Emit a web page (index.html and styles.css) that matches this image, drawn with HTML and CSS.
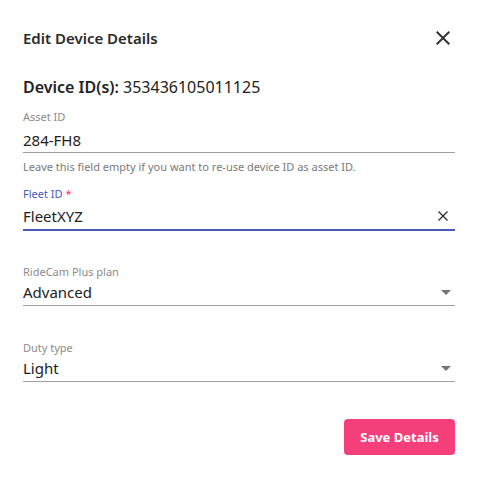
FILE: index.html
```html
<!DOCTYPE html>
<html>
<head>
<meta charset="utf-8">
<link rel="stylesheet" href="styles.css">
</head>
<body>
<div class="dialog">
  <div class="header">
    <h1 class="title">Edit Device Details</h1>
    <svg class="close" width="24" height="24" viewBox="0 0 24 24"><path d="M19 6.41L17.59 5 12 10.59 6.41 5 5 6.41 10.59 12 5 17.59 6.41 19 12 13.41 17.59 19 19 17.59 13.41 12z" fill="#333"/></svg>
  </div>
  <div class="device-id"><b>Device ID(s):</b> 353436105011125</div>

  <div class="field field-asset">
    <div class="label">Asset ID</div>
    <div class="control"><span class="value">284-FH8</span></div>
  </div>
  <div class="helper">Leave this field empty if you want to re-use device ID as asset ID.</div>

  <div class="field field-fleet">
    <div class="label label-focus">Fleet ID <span class="star">*</span></div>
    <div class="control control-focus">
      <span class="value">FleetXYZ</span>
      <svg class="clear" width="12" height="12" viewBox="0 0 12 12"><path d="M1.5 1.5L10.5 10.5M10.5 1.5L1.5 10.5" stroke="#333" stroke-width="1.4"/></svg>
    </div>
  </div>

  <div class="field field-select field-plan">
    <div class="label">RideCam Plus plan</div>
    <div class="control">
      <span class="value">Advanced</span>
      <svg class="arrow" width="24" height="24" viewBox="0 0 24 24"><path d="M7 10l5 5 5-5z" fill="#757575"/></svg>
    </div>
  </div>

  <div class="field field-select field-duty">
    <div class="label">Duty type</div>
    <div class="control">
      <span class="value">Light</span>
      <svg class="arrow" width="24" height="24" viewBox="0 0 24 24"><path d="M7 10l5 5 5-5z" fill="#757575"/></svg>
    </div>
  </div>

  <div class="actions">
    <button class="save">Save Details</button>
  </div>
</div>
</body>
</html>
```
FILE: styles.css
```css
html, body {
  margin: 0;
  padding: 0;
  background: #fff;
}
body {
  font-family: "Noto Sans", "Open Sans", sans-serif;
  color: #222;
}
.dialog {
  width: 479px;
  height: 479px;
  box-sizing: border-box;
  padding: 26px 24px 0 23px;
}
.header {
  display: flex;
  justify-content: space-between;
  align-items: center;
  height: 24px;
}
.title {
  margin: 0;
  font-size: 15px;
  line-height: 24px;
  font-weight: 600;
  color: #2b2b2b;
}
.close {
  display: block;
}
.device-id {
  margin-top: 26px;
  font-size: 16px;
  line-height: 22px;
  color: #222;
}
.device-id b {
  font-weight: 600;
}
.label {
  font-size: 11px;
  line-height: 14px;
  color: #8c8c8c;
}
.label-focus {
  color: #4a5ab9;
}
.star {
  color: #ea3d6e;
}
.control {
  display: flex;
  align-items: center;
  justify-content: space-between;
  height: 20px;
  padding-bottom: 2px;
  border-bottom: 1px solid #a0a0a0;
}
.value {
  font-size: 15px;
  line-height: 20px;
  color: #222;
}
.field-asset {
  margin-top: 12px;
}
.field-asset .control {
  margin-top: 6px;
}
.helper {
  margin-top: 7px;
  font-size: 11px;
  line-height: 14px;
  color: #7a7a7a;
}
.field-fleet {
  margin-top: 13px;
}
.field-fleet .control {
  margin-top: 5px;
}
.control-focus {
  padding-bottom: 3px;
  border-bottom: 2px solid #4a5ab9;
}
.clear {
  display: block;
  margin-right: 6px;
}
.field-plan {
  margin-top: 34px;
}
.field-duty {
  margin-top: 35px;
}
.field-select .control {
  margin-top: 3px;
  padding-bottom: 3px;
}
.arrow {
  display: block;
  margin-right: -3px;
}
.actions {
  display: flex;
  justify-content: flex-end;
  margin-top: 37px;
}
.save {
  width: 111px;
  height: 36px;
  border: none;
  border-radius: 4px;
  background: #f43f7b;
  color: #fff;
  font-family: "Noto Sans", "Open Sans", sans-serif;
  font-size: 13px;
  font-weight: 700;
  padding: 0;
}
```
